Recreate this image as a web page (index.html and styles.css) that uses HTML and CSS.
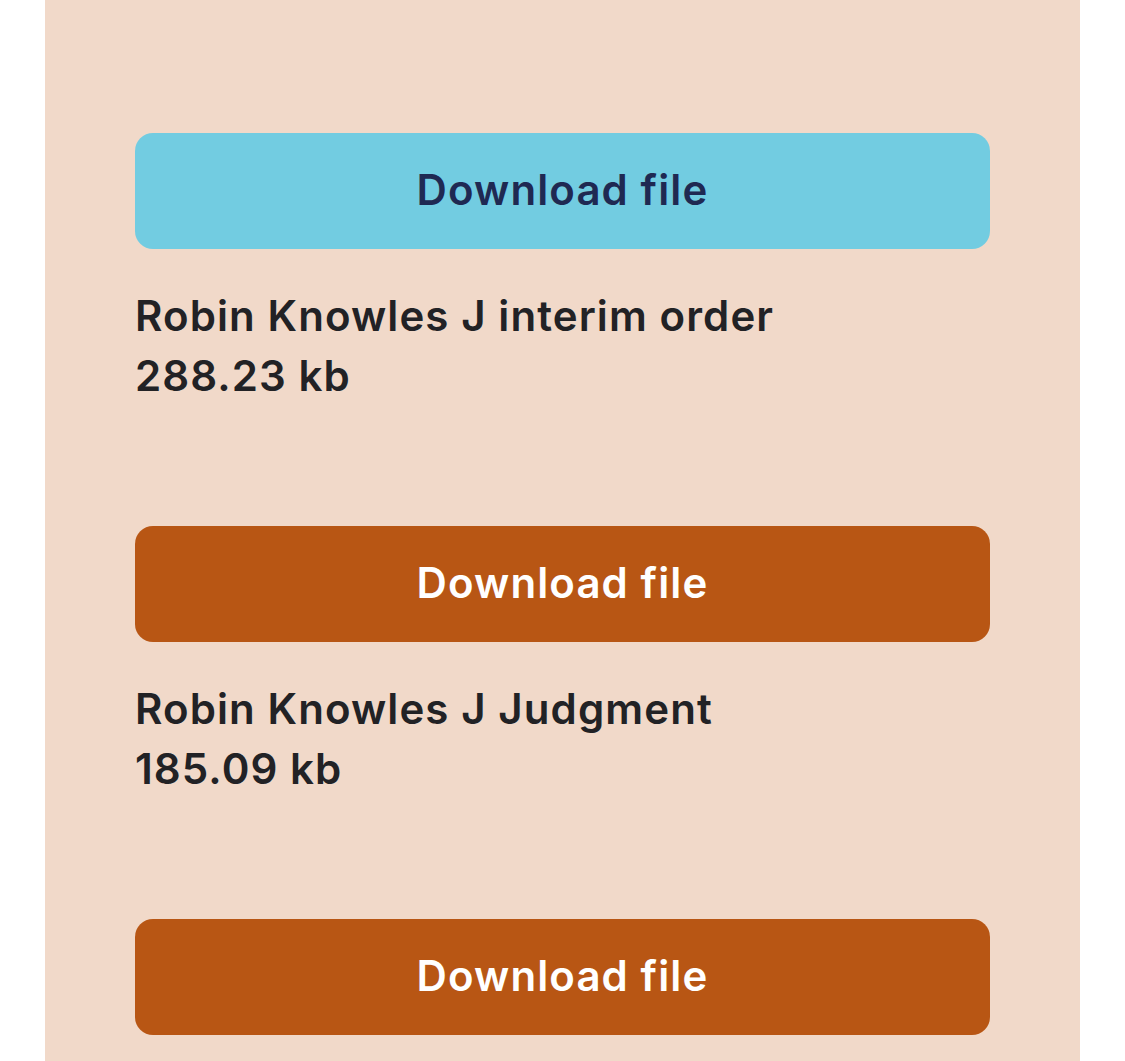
FILE: index.html
```html
<!DOCTYPE html>
<html lang="en">
<head>
<meta charset="utf-8">
<link rel="stylesheet" href="styles.css">
</head>
<body>
<div class="panel">
  <div class="item">
    <a class="btn btn-blue" href="#">Download file</a>
    <div class="meta">
      <div class="name">Robin Knowles J interim order</div>
      <div class="size">288.23 kb</div>
    </div>
  </div>
  <div class="item">
    <a class="btn btn-orange" href="#">Download file</a>
    <div class="meta">
      <div class="name">Robin Knowles J Judgment</div>
      <div class="size">185.09 kb</div>
    </div>
  </div>
  <div class="item">
    <a class="btn btn-orange" href="#">Download file</a>
  </div>
</div>
</body>
</html>
```

FILE: styles.css
```css
html, body {
  margin: 0;
  padding: 0;
  background: #ffffff;
  height: 100%;
}
body {
  font-family: "Inter", "Lato", sans-serif;
  overflow: hidden;
}
.panel {
  margin-left: 45px;
  width: 1035px;
  min-height: 1061px;
  box-sizing: border-box;
  padding: 133px 90px 0;
  background: #f1d9c9;
  display: flex;
  flex-direction: column;
}
.item {
  display: flex;
  flex-direction: column;
}
.btn {
  display: flex;
  align-items: center;
  justify-content: center;
  height: 116px;
  border-radius: 18px;
  text-decoration: none;
  font-size: 42px;
  font-weight: 600;
  letter-spacing: 1.1px;
  font-variant-ligatures: none;
  padding-bottom: 4px;
  box-sizing: border-box;
}
.btn-blue {
  background: #72cce1;
  color: #1f2952;
}
.btn-orange {
  background: #b85614;
  color: #ffffff;
}
.meta {
  margin-top: 37px;
  margin-bottom: 120px;
  color: #222225;
  font-size: 42px;
  font-weight: 600;
  letter-spacing: 1.1px;
  line-height: 60px;
}
```
